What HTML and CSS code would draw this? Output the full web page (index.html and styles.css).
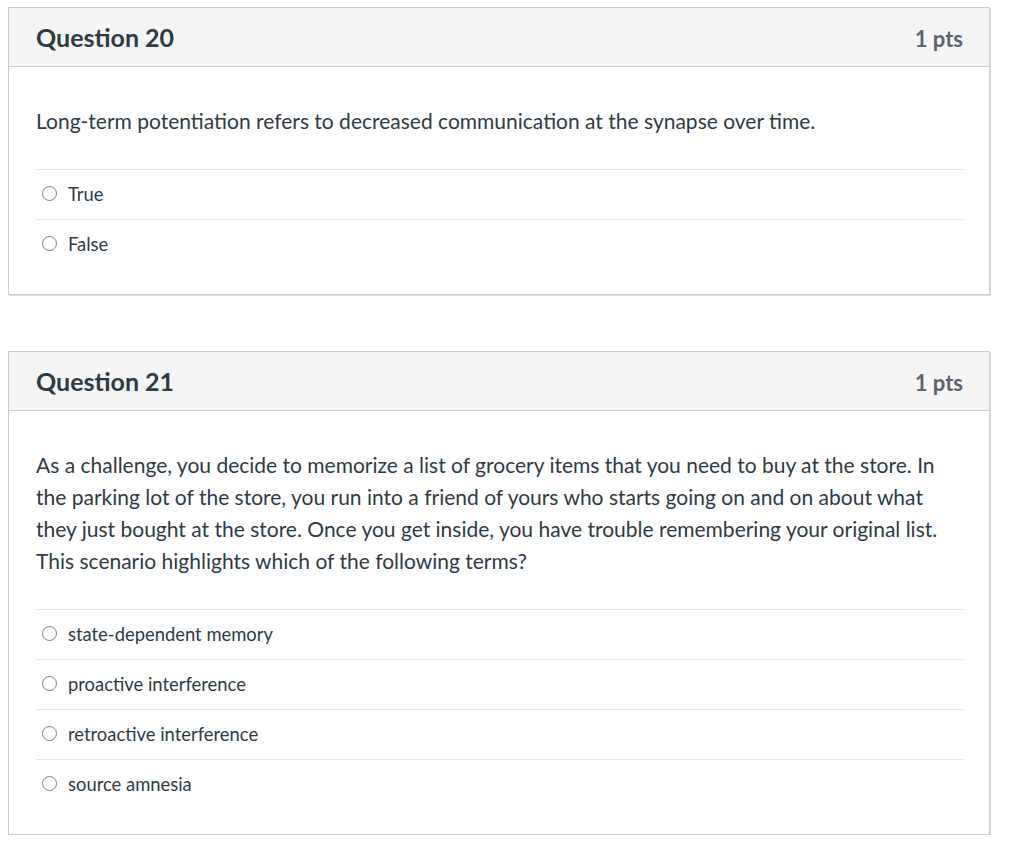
FILE: index.html
```html
<!DOCTYPE html>
<html lang="en">
<head>
<meta charset="utf-8">
<title>Quiz</title>
<link rel="stylesheet" href="styles.css">
</head>
<body>
<div class="quiz">
  <section class="question">
    <header class="q-header">
      <h2 class="q-title">Question 20</h2>
      <span class="q-points">1 pts</span>
    </header>
    <div class="q-body">
      <p class="q-text">Long-term potentiation refers to decreased communication at the synapse over time.</p>
      <ul class="answers">
        <li class="answer"><span class="radio"></span><span class="answer-label">True</span></li>
        <li class="answer"><span class="radio"></span><span class="answer-label">False</span></li>
      </ul>
    </div>
  </section>

  <section class="question">
    <header class="q-header">
      <h2 class="q-title">Question 21</h2>
      <span class="q-points">1 pts</span>
    </header>
    <div class="q-body">
      <p class="q-text">As a challenge, you decide to memorize a list of grocery items that you need to buy at the store. In the parking lot of the store, you run into a friend of yours who starts going on and on about what they just bought at the store. Once you get inside, you have trouble remembering your original list. This scenario highlights which of the following terms?</p>
      <ul class="answers">
        <li class="answer"><span class="radio"></span><span class="answer-label">state-dependent memory</span></li>
        <li class="answer"><span class="radio"></span><span class="answer-label">proactive interference</span></li>
        <li class="answer"><span class="radio"></span><span class="answer-label">retroactive interference</span></li>
        <li class="answer"><span class="radio"></span><span class="answer-label">source amnesia</span></li>
      </ul>
    </div>
  </section>
</div>
</body>
</html>
```
FILE: styles.css
```css
html, body {
  margin: 0;
  padding: 0;
  background: #ffffff;
}

body {
  font-family: Lato, "Open Sans", "Liberation Sans", sans-serif;
  color: #2d3b45;
}

.quiz {
  padding: 7px 0 0 8px;
  display: flex;
  flex-direction: column;
  gap: 56px;
  width: 982px;
}

.question {
  border: 1px solid #c7cdd1;
  box-shadow: 1px 1px 0 #d8dcdf;
  background: #fff;
}

.q-header {
  display: flex;
  align-items: center;
  justify-content: space-between;
  height: 58px;
  padding: 0 26px 0 27px;
  background: #f5f5f5;
  border-bottom: 1px solid #c7cdd1;
}

.q-title {
  margin: 0;
  font-size: 25px;
  font-weight: 700;
  color: #2d3b45;
}

.q-points {
  font-size: 22px;
  font-weight: 700;
  color: #5b6570;
  padding-top: 2px;
}

.q-body {
  padding: 38px 26px 25px 27px;
}

.q-text {
  margin: 0 0 32px;
  font-size: 21px;
  line-height: 32px;
}

.answers {
  list-style: none;
  margin: 0;
  padding: 0;
}

.answer {
  display: flex;
  align-items: center;
  height: 47px;
  box-sizing: content-box;
  padding: 0 0 2px 6px;
  border-top: 1px solid #e2e4e6;
  font-size: 18.4px;
}

.radio {
  width: 15px;
  height: 15px;
  border: 1px solid #73818c;
  border-radius: 50%;
  box-sizing: border-box;
  margin-right: 11px;
  flex: none;
}

.answer-label {
  color: #2d3b45;
}
```
